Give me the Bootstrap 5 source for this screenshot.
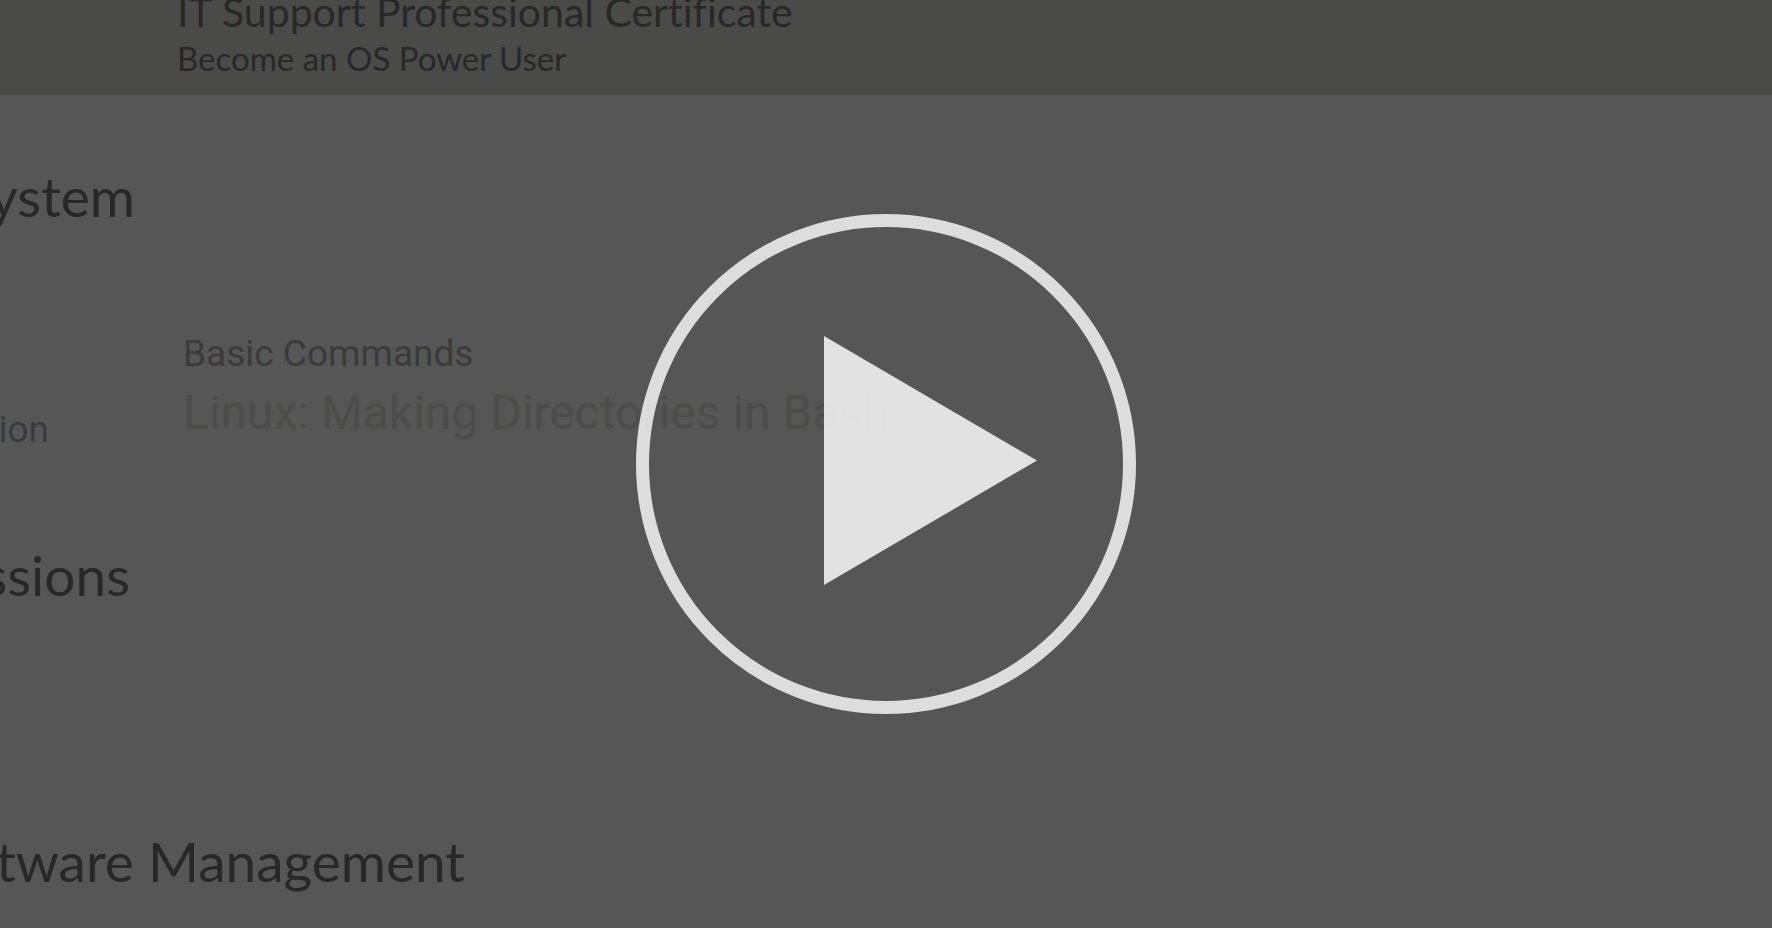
<!DOCTYPE html>
<html lang="en">
<head>
<meta charset="utf-8">
<meta name="viewport" content="width=device-width, initial-scale=1">
<title>IT Support Professional Certificate</title>
<link href="https://cdn.jsdelivr.net/npm/bootstrap@5.3.0/dist/css/bootstrap.min.css" rel="stylesheet">
<style>
  body { background: #565656; color: #282828; font-family: Lato, sans-serif; font-variant-ligatures: none; }
  .stage { min-height: 100vh; }
  .course-bar { height: 95px; padding: 0 0 17px 177px; background: #4a4a48; }
  .course-title { font-size: 41px; line-height: 52px; }
  .course-sub { font-size: 33px; line-height: 40px; }
  .outline { padding-top: 68px; }
  .topic { font-size: 55px; line-height: 66px; }
  .topic-system { width: 135px; }
  .topic-permissions { width: 130px; }
  .topic-software { width: 465px; }
  .lesson-row { height: 120px; margin: 103px 0 90px; font-family: Roboto, sans-serif; font-size: 37px; line-height: 44px; color: #3b3b3b; }
  .lesson-side { width: 183px; }
  .lesson-side span { width: 49px; }
  .lesson-next { font-size: 48px; line-height: 56px; margin-top: 9px; color: #4d4d4c; }
  .gap-block { margin-top: 220px; }
  .play { width: min(500px, 80vmin); }
  .play svg { width: 100%; }
</style>
</head>
<body>
<div class="stage position-relative overflow-hidden">
  <header class="course-bar d-flex flex-column justify-content-end overflow-hidden text-nowrap">
    <h1 class="course-title fw-normal m-0">IT Support Professional Certificate</h1>
    <p class="course-sub m-0">Become an OS Power User</p>
  </header>
  <main class="outline text-nowrap">
    <h2 class="topic topic-system fw-normal m-0 d-flex justify-content-end">ystem</h2>
    <div class="lesson-row d-flex">
      <div class="lesson-side d-flex align-items-end flex-shrink-0"><span class="d-flex justify-content-end">ion</span></div>
      <div>
        <p class="m-0">Basic Commands</p>
        <p class="lesson-next mb-0">Linux: Making Directories in Bash</p>
      </div>
    </div>
    <h2 class="topic topic-permissions fw-normal m-0 d-flex justify-content-end">ssions</h2>
    <h2 class="topic topic-software gap-block fw-normal mb-0 d-flex justify-content-end">tware Management</h2>
  </main>
  <button type="button" aria-label="Play video" class="play btn border-0 p-0 rounded-circle position-absolute top-50 start-50 translate-middle">
    <svg class="d-block" viewBox="0 0 500 500" aria-hidden="true">
      <circle cx="250" cy="250" r="243.5" fill="none" stroke="#fff" stroke-opacity=".8" stroke-width="13"/>
      <path d="M188 122 401 246.500 188 371z" fill="#fff" fill-opacity=".83"/>
    </svg>
  </button>
</div>
<script src="https://cdn.jsdelivr.net/npm/bootstrap@5.3.0/dist/js/bootstrap.bundle.min.js"></script>
</body>
</html>
